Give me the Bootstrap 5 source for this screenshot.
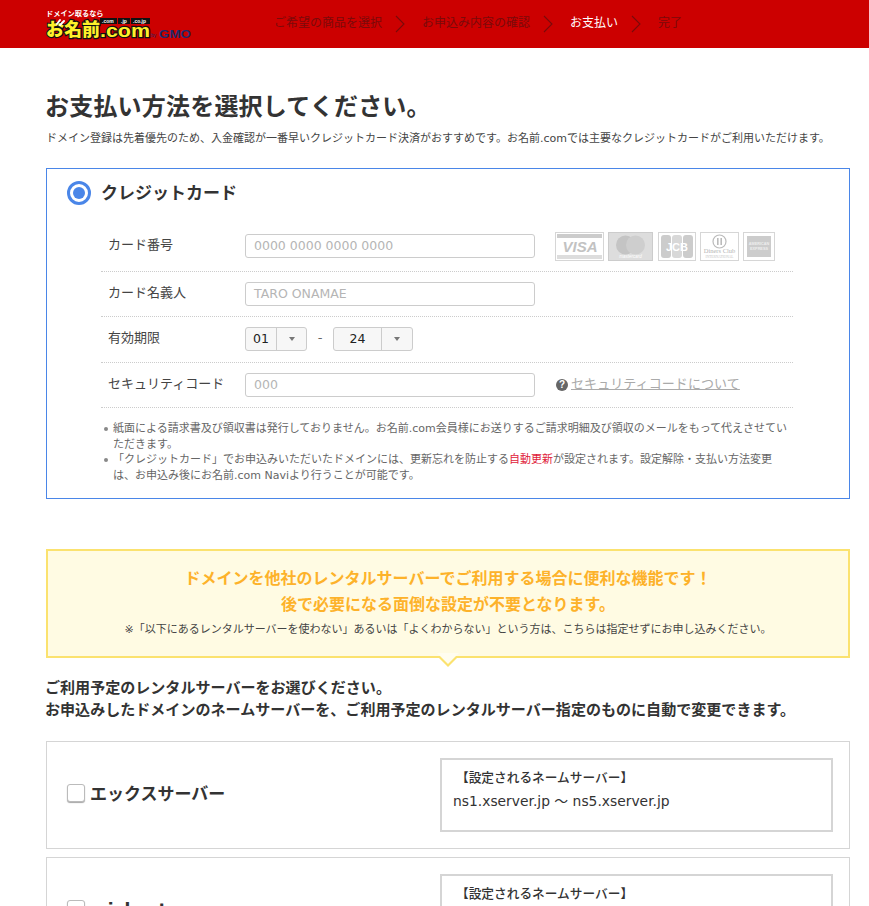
<!DOCTYPE html>
<html lang="ja">
<head>
<meta charset="utf-8">
<link href="https://cdn.jsdelivr.net/npm/bootstrap@5.3.0/dist/css/bootstrap.min.css" rel="stylesheet">
<style>
html,body{background:#fff}
body{font-family:"DejaVu Sans","Noto Sans CJK JP",sans-serif;color:#333;font-size:14px;overflow:hidden;height:906px}
.topbar{background:#cc0000;height:48px;padding-left:46px}
.logo-wrap{width:148px;height:48px}
.steps{margin-left:80px;font-size:12px;color:#7a0a0a;padding-bottom:3px}
.steps .on{color:#fff}
.step-gap{margin:3px 17px 0 13px}
.main-area{padding:0 19px 0 46px}
.pagetitle{font-size:24px;font-weight:700;color:#333;margin:45px 0 0 -1px;line-height:28px;letter-spacing:.2px}
.pagelead{font-size:11px;color:#444;margin:9px 0 0;line-height:18px;white-space:nowrap}
.paybox{border:1px solid #4a86e8;height:331px;margin-top:20px;padding:10px 56px 0 54px}
.radio-on{width:24px;height:24px;border:3px solid #4a86e8;border-radius:50%;margin-left:-34px;margin-right:10px;padding:3px}
.radio-on i{display:block;width:12px;height:12px;border-radius:50%;background:#4a86e8}
.payhead{font-size:17px;font-weight:700;line-height:28px;height:28px;margin-bottom:16px}
.formrow{border-bottom:1px dotted #ccc;padding-left:7px;display:flex;align-items:flex-start;padding-top:10px}
.r1{height:49px;padding-top:11px}.r2{height:45px}.r3{height:46px}.r4{height:45px}
.flabel{width:137px;font-size:13px;color:#444;line-height:20px;padding-top:1px}
.finput{width:290px;height:24px;border:1px solid #ccc;border-radius:3px;padding:0 8px;font-size:12.5px;color:#b5b5b5;line-height:22px;background:#fff}
.cards{margin:-2px 0 0 20px;gap:4px}
.cardnudge{margin-left:1px}
.selbox{height:24px;border:1px solid #ccc;border-radius:3px;background:#f7f7f7;font-size:12.5px;color:#222;line-height:22px}
.selbox b{font-weight:400;display:block;text-align:center;border-right:1px solid #ccc}
.selbox u{text-decoration:none;display:block;width:0;height:0;border:3.5px solid transparent;border-top:4px solid #777;border-bottom:0;margin:0 auto;position:relative;top:9px}
.sel-a{width:31px}.sel-b{width:48px}.sel-arrow{width:29px}.sel-arrow-w{width:30px}
.dashgap{width:26px;text-align:center;font-size:13px;color:#666;line-height:22px}
.helplink{margin:0 0 0 21px;font-size:13px;line-height:21px;color:#999;letter-spacing:.08px}
.helplink a{color:#aaa;text-decoration:underline}
.qmark{display:inline-block;width:12px;height:12px;border-radius:50%;background:#666;color:#fff;font-size:10px;line-height:12px;text-align:center;font-weight:700;margin-right:3px;vertical-align:0;font-family:"Liberation Sans",sans-serif}
.notes{list-style:none;margin:13px 0 0;padding:0 0 0 12px;font-size:11px;line-height:15.5px;color:#666;width:692px}
.notes li{position:relative}
.notes li::before{content:"";position:absolute;left:-9px;top:6px;width:4px;height:4px;border-radius:50%;background:#888}
.notes em{font-style:normal;color:#e0213a}
.promo{position:relative;height:109px;margin-top:50px;border:2px solid #fbe26f;background:#fffbe3;text-align:center;padding-top:15px}
.promo::after,.promo::before{content:"";position:absolute;left:389px;width:0;height:0;border-left:11px solid transparent;border-right:11px solid transparent}
.promo::before{bottom:-11px;border-top:11px solid #fbe26f}
.promo::after{bottom:-8px;border-top:11px solid #fffdf0}
.promo-t{font-size:16px;font-weight:700;color:#fdb22a;line-height:26px}
.promo-s{font-size:11px;color:#444;line-height:18px;margin-top:3px}
.selecttxt{font-size:15.05px;font-weight:700;line-height:21.5px;color:#333;margin:20px 0 0 -1px}
.srv{border:1px solid #d5d5d5;height:108px;display:flex;align-items:flex-start;padding:16px 16px 0 20px}
.srv+.srv{margin-top:8px}
.srvlist{margin-top:20px}
.srvname{flex:1;display:flex;align-items:center;font-size:17px;font-weight:700;height:70px}
.srvlabel{padding-top:4px}
.chk{width:18px;height:18px;border:1px solid #bbb;border-radius:3px;box-shadow:0 1px 1px rgba(0,0,0,.35);margin-right:5px;background:#fff;flex:none}
.nsbox{width:393px;height:74px;border:2px solid #d5d5d5;padding:8px 11px;color:#333}
.nshead{padding-left:3px;line-height:20px;font-weight:500;font-size:12.7px}
.nsline{font-size:13.85px;line-height:26px}
</style>
</head>
<body>
<header class="topbar d-flex align-items-center">
  <div class="logo-wrap">
    <svg width="148" height="48" viewBox="0 0 148 48" xmlns="http://www.w3.org/2000/svg">
      <text x="0" y="16" font-size="7.200" font-weight="700" fill="#fff" font-family="Noto Sans CJK JP">ドメイン取るなら</text>
      <rect x="54" y="18" width="17" height="6" fill="#111"/><rect x="72" y="18" width="12" height="6" fill="#111"/><rect x="85" y="18" width="19" height="6" fill="#111"/>
      <text x="56" y="23.300" font-size="5" font-weight="700" fill="#fff" font-family="Liberation Sans">.com</text>
      <text x="75" y="23.300" font-size="5" font-weight="700" fill="#fff" font-family="Liberation Sans">.jp</text>
      <text x="87" y="23.300" font-size="5" font-weight="700" fill="#fff" font-family="Liberation Sans">.co.jp</text>
      <text x="0" y="36" font-size="18" font-weight="900" fill="#fff02a" stroke="#111" stroke-width="2.400" paint-order="stroke" font-family="Noto Sans CJK JP">お名前</text>
      <path d="M11 24l3-4M14 25l4-4" stroke="#fff" stroke-width="2" stroke-linecap="round"/>
      <text x="54" y="36.500" font-size="19" font-weight="700" fill="#fff02a" stroke="#111" stroke-width="2.400" paint-order="stroke" font-family="Liberation Sans" textLength="50" lengthAdjust="spacingAndGlyphs">.com</text>
      <text x="105" y="37" font-size="5" fill="#1d2a6b" font-family="Liberation Sans">by</text>
      <text x="113" y="37.500" font-size="10" font-weight="700" fill="#1d2a6b" font-family="Liberation Sans" textLength="32" lengthAdjust="spacingAndGlyphs">GMO</text>
    </svg>
  </div>
  <nav class="steps d-flex align-items-center">
    <span>ご希望の商品を選択</span>
    <svg class="step-gap" width="10" height="18" viewBox="0 0 10 18"><path d="M1 1l8 8-8 8" fill="none" stroke="#7a0a0a" stroke-width="1.100"/></svg>
    <span>お申込み内容の確認</span>
    <svg class="step-gap" width="10" height="18" viewBox="0 0 10 18"><path d="M1 1l8 8-8 8" fill="none" stroke="#7a0a0a" stroke-width="1.100"/></svg>
    <span class="on">お支払い</span>
    <svg class="step-gap" width="10" height="18" viewBox="0 0 10 18"><path d="M1 1l8 8-8 8" fill="none" stroke="#7a0a0a" stroke-width="1.100"/></svg>
    <span>完了</span>
  </nav>
</header>
<main class="main-area">
  <h1 class="pagetitle">お支払い方法を選択してください。</h1>
  <p class="pagelead">ドメイン登録は先着優先のため、入金確認が一番早いクレジットカード決済がおすすめです。お名前.comでは主要なクレジットカードがご利用いただけます。</p>
  <section class="paybox">
    <div class="payhead d-flex align-items-center"><span class="radio-on"><i></i></span>クレジットカード</div>
    <div class="formrow r1">
      <div class="flabel">カード番号</div>
      <div class="finput">0000 0000 0000 0000</div>
      <div class="cards d-flex">
        <svg width="49" height="29" viewBox="0 0 49 29"><rect x=".5" y=".5" width="48" height="28" fill="#fff" stroke="#d6d6d6"/><rect x="2" y="2" width="45" height="4" fill="#ccc"/><rect x="2" y="23" width="45" height="4" fill="#ddd"/><text x="25" y="20" text-anchor="middle" font-family="Liberation Sans" font-size="15" font-weight="700" font-style="italic" fill="#c2c2c2">VISA</text></svg>
        <svg width="45" height="29" viewBox="0 0 45 29"><rect x=".5" y=".5" width="44" height="28" fill="#ddd" stroke="#ccc"/><circle cx="17.500" cy="13" r="9.500" fill="#c4c4c4"/><circle cx="27.500" cy="13" r="9.500" fill="#cecece"/><text x="22.500" y="26" text-anchor="middle" font-family="Liberation Sans" font-size="4.500" font-style="italic" fill="#fff">mastercard</text></svg>
        <svg class="cardnudge" width="38" height="29" viewBox="0 0 38 29"><rect x=".5" y=".5" width="37" height="28" fill="#fff" stroke="#d6d6d6"/><rect x="3" y="3" width="10" height="23" rx="3" fill="#ccc"/><rect x="14" y="3" width="10" height="23" rx="3" fill="#d8d8d8"/><rect x="25" y="3" width="10" height="23" rx="3" fill="#ccc"/><text x="19" y="19" text-anchor="middle" font-family="Liberation Sans" font-size="11" font-weight="700" fill="#fff">JCB</text></svg>
        <svg width="39" height="29" viewBox="0 0 39 29"><rect x=".5" y=".5" width="38" height="28" fill="#fff" stroke="#d6d6d6"/><circle cx="19.500" cy="9.500" r="6.500" fill="none" stroke="#bbb" stroke-width="1.200"/><rect x="17" y="6" width="1.600" height="7" fill="#bbb"/><rect x="20.400" y="6" width="1.600" height="7" fill="#bbb"/><text x="19.500" y="21" text-anchor="middle" font-family="Liberation Serif" font-size="6.500" fill="#b5b5b5">Diners Club</text><text x="19.500" y="26" text-anchor="middle" font-family="Liberation Serif" font-size="3.500" fill="#c5c5c5">INTERNATIONAL</text></svg>
        <svg width="32" height="29" viewBox="0 0 32 29"><rect x=".5" y=".5" width="31" height="28" fill="#fff" stroke="#d6d6d6"/><rect x="4" y="4" width="24" height="21" fill="#ccc"/><text x="16" y="13" text-anchor="middle" font-family="Liberation Sans" font-size="3.800" font-weight="700" fill="#eee">AMERICAN</text><text x="16" y="18" text-anchor="middle" font-family="Liberation Sans" font-size="3.800" font-weight="700" fill="#eee">EXPRESS</text></svg>
      </div>
    </div>
    <div class="formrow r2">
      <div class="flabel">カード名義人</div>
      <div class="finput">TARO ONAMAE</div>
    </div>
    <div class="formrow r3">
      <div class="flabel">有効期限</div>
      <div class="selbox d-flex"><b class="sel-a">01</b><span class="sel-arrow"><u></u></span></div>
      <span class="dashgap">-</span>
      <div class="selbox d-flex"><b class="sel-b">24</b><span class="sel-arrow-w"><u></u></span></div>
    </div>
    <div class="formrow r4">
      <div class="flabel">セキュリティコード</div>
      <div class="finput">000</div>
      <div class="helplink"><span class="qmark">?</span><a href="#">セキュリティコードについて</a></div>
    </div>
    <ul class="notes">
      <li>紙面による請求書及び領収書は発行しておりません。お名前.com会員様にお送りするご請求明細及び領収のメールをもって代えさせていただきます。</li>
      <li>「クレジットカード」でお申込みいただいたドメインには、更新忘れを防止する<em>自動更新</em>が設定されます。設定解除・支払い方法変更は、お申込み後にお名前.com Naviより行うことが可能です。</li>
    </ul>
  </section>
  <section class="promo">
    <div class="promo-t">ドメインを他社のレンタルサーバーでご利用する場合に便利な機能です！<br>後で必要になる面倒な設定が不要となります。</div>
    <div class="promo-s">※「以下にあるレンタルサーバーを使わない」あるいは「よくわからない」という方は、こちらは指定せずにお申し込みください。</div>
  </section>
  <p class="selecttxt">ご利用予定のレンタルサーバーをお選びください。<br>お申込みしたドメインのネームサーバーを、ご利用予定のレンタルサーバー指定のものに自動で変更できます。</p>
  <div class="srvlist">
    <div class="srv">
      <div class="srvname"><span class="chk"></span><span class="srvlabel">エックスサーバー</span></div>
      <div class="nsbox"><div class="nshead">【設定されるネームサーバー】</div><div class="nsline">ns1.xserver.jp ～ ns5.xserver.jp</div></div>
    </div>
    <div class="srv">
      <div class="srvname"><span class="chk"></span><span class="srvlabel">mixhost</span></div>
      <div class="nsbox"><div class="nshead">【設定されるネームサーバー】</div><div class="nsline">ns1.mixhost.jp ～ ns5.mixhost.jp</div></div>
    </div>
  </div>
</main>
<script src="https://cdn.jsdelivr.net/npm/bootstrap@5.3.0/dist/js/bootstrap.bundle.min.js"></script>
</body>
</html>
